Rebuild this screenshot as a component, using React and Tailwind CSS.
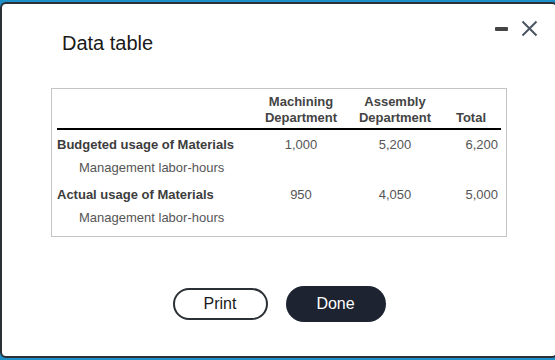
export default function App() {
  const rows = [
    { label: "Budgeted usage of Materials", a: "1,000", b: "5,200", t: "6,200" },
    { sub: "Management labor-hours" },
    { label: "Actual usage of Materials", a: "950", b: "4,050", t: "5,000" },
    { sub: "Management labor-hours" },
  ];

  return (
    <div className="h-[360px] w-[555px] bg-[#1e90c8] py-[2px] overflow-hidden" style={{ fontFamily: '"Liberation Sans", Arial, sans-serif' }}>
      <div className="relative h-full w-[558px] rounded-[6px] border-2 border-[#2b2f36] bg-white">
        {/* window controls */}
        <div className="absolute right-[18px] top-[16px] flex items-center gap-[13px]">
          <div className="h-[4px] w-[13px] rounded-[1px] bg-[#444]" />
          <svg width="17" height="17" viewBox="0 0 17 17">
            <path d="M1.5 1.5L15.5 15.5M15.5 1.5L1.5 15.5" stroke="#4b5563" strokeWidth="2" />
          </svg>
        </div>

        <div className="pl-[60px] pt-[27px] text-[20px] leading-[24px] text-[#1a1a1a]">Data table</div>

        <div className="ml-[49px] mt-[33px] w-[456px] border border-[#c4c4c4] px-[5px] pt-[5px] pb-[6px]">
          <div className="grid grid-cols-[196px_96px_92px_60px] items-end border-b-2 border-black pb-[2px] text-[13px] font-bold leading-[16px] text-[#444]">
            <div />
            <div className="text-center">Machining<br />Department</div>
            <div className="text-center">Assembly<br />Department</div>
            <div className="pr-[15px] text-right">Total</div>
          </div>
          {rows.map((r, i) =>
            r.sub ? (
              <div key={i} className="h-[24px] pl-[22px] text-[13px] leading-[24px] text-[#555]">{r.sub}</div>
            ) : (
              <div key={i} className="grid h-[26px] grid-cols-[196px_96px_92px_60px] pt-[3px] text-[13px] leading-[24px]">
                <div className="font-bold text-[#3d3d3d]">{r.label}</div>
                <div className="text-center text-[#555]">{r.a}</div>
                <div className="text-center text-[#555]">{r.b}</div>
                <div className="pr-[3px] text-right text-[#555]">{r.t}</div>
              </div>
            )
          )}
        </div>

        <div className="mt-[49px] flex items-center justify-center gap-[18px]">
          <button className="h-[32px] w-[95px] rounded-full border-2 border-[#2b2f36] bg-white text-[16px] text-[#1a1a1a]">Print</button>
          <button className="h-[36px] w-[100px] rounded-full bg-[#1d2330] text-[16px] text-white">Done</button>
        </div>
      </div>
    </div>
  );
}
